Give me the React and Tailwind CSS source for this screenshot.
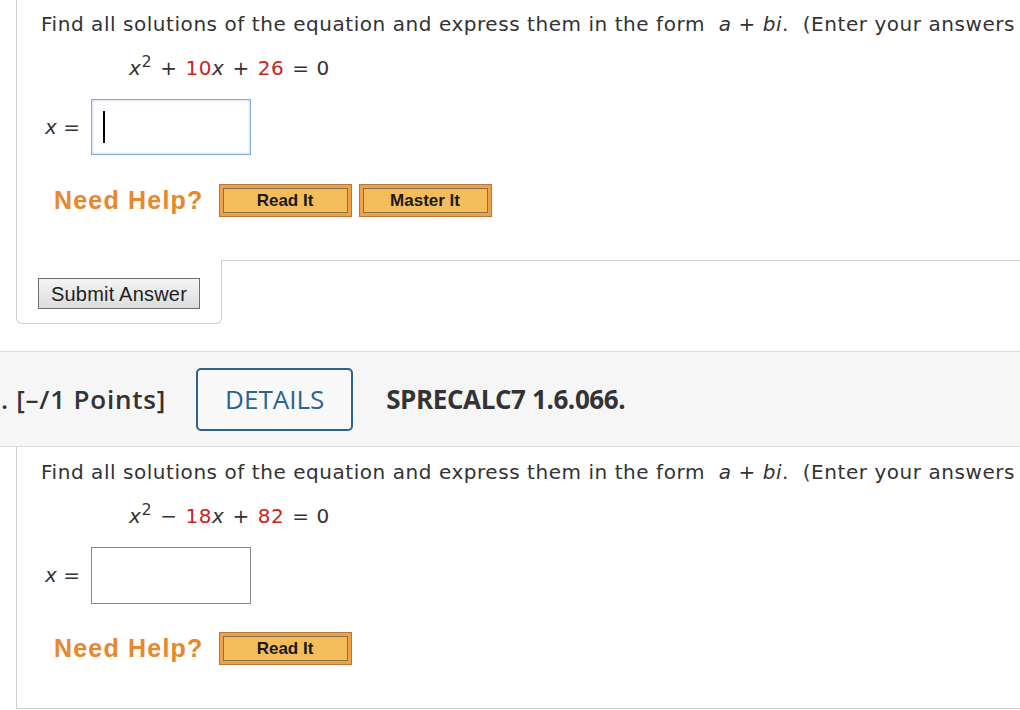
import React from "react";

const verdana = { fontFamily: '"DejaVu Sans", Verdana, sans-serif' };
const helv = { fontFamily: '"Liberation Sans", Arial, sans-serif' };
const open = { fontFamily: '"Open Sans", "Noto Sans", sans-serif' };

function HelpButton({ label }) {
  return (
    <div className="w-[133px] h-[33px] border border-[#b07b3f] bg-[#f0a24a] p-[3px]">
      <div
        className="h-full border border-[#8f7045] bg-[#f4bd5c] flex items-center justify-center text-[17px] font-bold text-[#1a1a1a]"
        style={helv}
      >
        {label}
      </div>
    </div>
  );
}

function Equation({ op, b, c }) {
  return (
    <div className="pl-[88px] mt-[20px] h-[24px] flex items-center text-[20px] tracking-[0.55px] text-[#333]" style={verdana}>
      <span className="italic">x</span>
      <sup className="text-[16px] -top-[6px] relative align-baseline">2</sup>
      <span className="ml-[8px]">{op}</span>
      <span className="ml-[8px] text-[#c8251c]">{b}</span>
      <span className="italic">x</span>
      <span className="ml-[8px]">+</span>
      <span className="ml-[8px] text-[#c8251c]">{c}</span>
      <span className="ml-[8px]">= 0</span>
    </div>
  );
}

function Question({ op, b, c, focused, master }) {
  return (
    <div className="pl-[24px]">
      <div className="h-[24px] leading-[24px] text-[20px] tracking-[0.55px] text-[#333] whitespace-nowrap" style={verdana}>
        Find all solutions of the equation and express them in the form&nbsp; <span className="italic">a</span> + <span className="italic">bi</span>.&nbsp; (Enter your answers as a comma-separated list.)
      </div>
      <Equation op={op} b={b} c={c} />
      <div className="flex items-center h-[56px] mt-[19px]">
        <span className="ml-[4px] w-[46px] text-[20px] text-[#333]" style={verdana}>
          <span className="italic">x</span> =
        </span>
        {focused ? (
          <div className="w-[160px] h-[56px] border border-[#8aaad6] shadow-[inset_0_0_3px_rgba(120,160,220,0.6)] bg-white flex items-center pl-[11px]">
            <div className="w-[2px] h-[32px] bg-black" />
          </div>
        ) : (
          <div className="w-[160px] h-[57px] border border-[#8a8a8a] bg-white" />
        )}
      </div>
      <div className="flex items-center mt-[29px] h-[33px]">
        <span className="ml-[13px] text-[25px] tracking-[1.2px] font-bold text-[#e8872b] mr-[15px]" style={helv}>
          Need Help?
        </span>
        <HelpButton label="Read It" />
        {master && (
          <div className="ml-[7px]">
            <HelpButton label="Master It" />
          </div>
        )}
      </div>
    </div>
  );
}

export default function App() {
  return (
    <div className="w-[1020px] h-[710px] overflow-hidden bg-white">
      <div className="ml-[16px] border-l border-[#cfcfcf] pt-[12px] h-[260px]">
        <Question op="+" b="10" c="26" focused master />
      </div>
      <div className="flex">
        <div className="ml-[16px] w-[206px] h-[64px] border-l border-b border-r border-[#cfcfcf] rounded-b-[6px] pl-[21px] pt-[18px]">
          <button
            className="w-[162px] h-[31px] border border-[#6e6e6e] bg-gradient-to-b from-[#f5f5f5] to-[#dcdcdc] text-[20px] tracking-[0.2px] text-[#222] leading-none"
            style={helv}
          >
            Submit Answer
          </button>
        </div>
        <div className="flex-1 border-t border-[#cfcfcf]" />
      </div>
      <div className="mt-[27px] h-[96px] bg-[#f6f6f6] border-t border-b border-[#dcdcdc] flex items-center text-[26px] text-[#333]" style={open}>
        <span className="ml-[1px] font-semibold">.</span>
        <span className="ml-[8px] font-semibold tracking-[0.8px]">[–/1 Points]</span>
        <div className="ml-[30px] w-[157px] h-[63px] border-2 border-[#2a6394] rounded-[5px] flex items-center justify-center text-[#2a6394] bg-[#f9f9f9]">
          DETAILS
        </div>
        <span className="ml-[33px] font-bold tracking-[-0.4px]">SPRECALC7 1.6.066.</span>
      </div>
      <div className="ml-[16px] border-l border-b border-[#cfcfcf] pt-[13px] h-[262px]">
        <Question op="−" b="18" c="82" />
      </div>
    </div>
  );
}
